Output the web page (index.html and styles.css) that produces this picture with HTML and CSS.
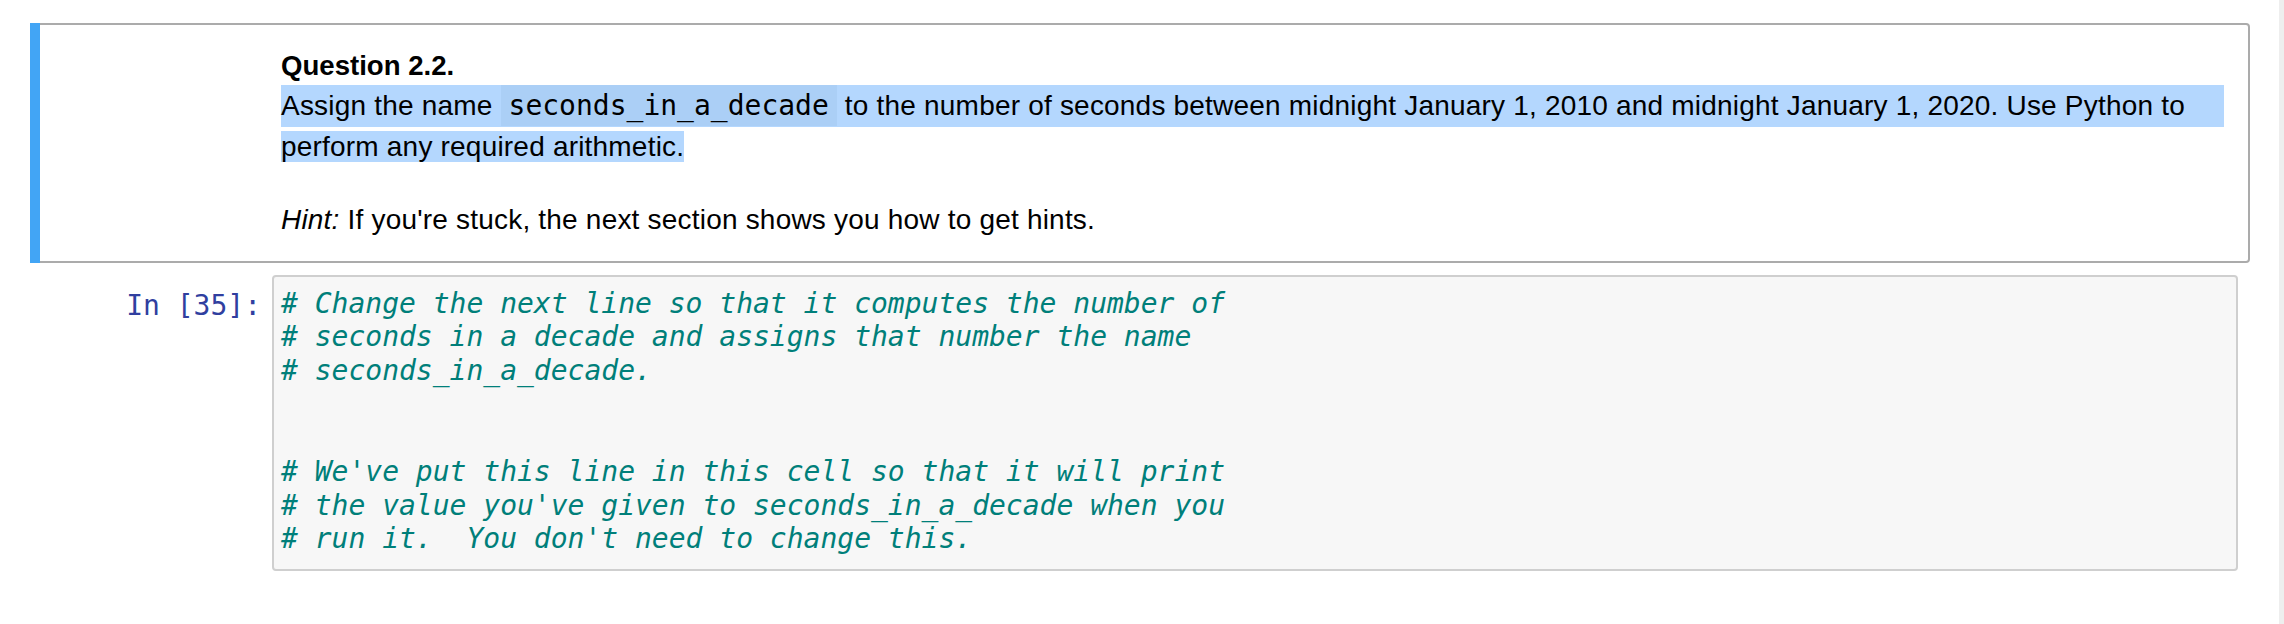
FILE: index.html
```html
<!DOCTYPE html>
<html>
<head>
<meta charset="utf-8">
<link rel="stylesheet" href="styles.css">
</head>
<body>
<div class="page">
  <div class="notebook">
    <div class="cell text-cell selected">
      <div class="prompt"></div>
      <div class="rendered">
        <p class="q-title"><strong>Question 2.2.</strong></p>
        <div class="sel-line">Assign the name <code>seconds_in_a_decade</code> to the number of seconds between midnight January 1, 2010 and midnight January 1, 2020. Use Python to</div>
        <p class="line2"><span class="sel">perform any required arithmetic.</span></p>
        <p class="hint"><em>Hint:</em> If you're stuck, the next section shows you how to get hints.</p>
      </div>
    </div>
    <div class="cell code-cell">
      <div class="prompt input-prompt">In&nbsp;[35]:</div>
      <div class="input-area"><pre class="code"># Change the next line so that it computes the number of
# seconds in a decade and assigns that number the name
# seconds_in_a_decade.


# We've put this line in this cell so that it will print
# the value you've given to seconds_in_a_decade when you
# run it.  You don't need to change this.</pre></div>
    </div>
  </div>
  <div class="scroll-track"></div>
</div>
</body>
</html>
```

FILE: styles.css
```css
html, body {
  margin: 0;
  padding: 0;
  background: #ffffff;
}

.page {
  display: flex;
  height: 624px;
  overflow: hidden;
}

.notebook {
  flex: 1;
  padding: 23px 29px 0 30px;
  min-width: 0;
}

.scroll-track {
  width: 5px;
  flex: none;
  background: #eeeeee;
}

.cell {
  display: flex;
  border: 2px solid transparent;
  border-radius: 4px;
  padding: 10px;
}

.text-cell.selected {
  border-color: #ababab;
  position: relative;
}

.text-cell.selected::before {
  content: "";
  position: absolute;
  left: -2px;
  top: -2px;
  bottom: -2px;
  width: 10px;
  background: #42a5f5;
}

.prompt {
  width: 230px;
  flex: none;
  box-sizing: border-box;
  padding-right: 11px;
  text-align: right;
}

.rendered {
  flex: 1;
  min-width: 0;
  padding: 10.5px 14px 11.5px 9px;
  font-family: "Liberation Sans", Arial, sans-serif;
  font-size: 28px;
  letter-spacing: 0.2px;
  line-height: 39.5px;
  color: #000000;
}

.rendered p {
  margin: 0;
}

.q-title strong {
  font-size: 27.6px;
  letter-spacing: 0;
}

.sel-line {
  background: #b4d7fe;
  white-space: nowrap;
  line-height: 42px;
}

.sel {
  background: #b4d7fe;
}

.sel-line code {
  font-family: "DejaVu Sans Mono", monospace;
  font-size: 28px;
  letter-spacing: 0;
  background: #abcff6;
  padding: 4px 8px;
}

.hint {
  margin-top: 33.5px !important;
}

.input-prompt {
  font-family: "DejaVu Sans Mono", monospace;
  font-size: 28px;
  line-height: 33.7px;
  color: #303f9f;
  padding-top: 13.5px;
  white-space: nowrap;
}

.input-area {
  flex: 1;
  min-width: 0;
  background: #f7f7f7;
  border: 2px solid #cfcfcf;
  border-radius: 4px;
  padding: 9.5px 7px 13px;
}

.code {
  margin: 0;
  font-family: "DejaVu Sans Mono", monospace;
  font-style: italic;
  font-size: 28px;
  line-height: 33.7px;
  color: #007f7a;
}
```
